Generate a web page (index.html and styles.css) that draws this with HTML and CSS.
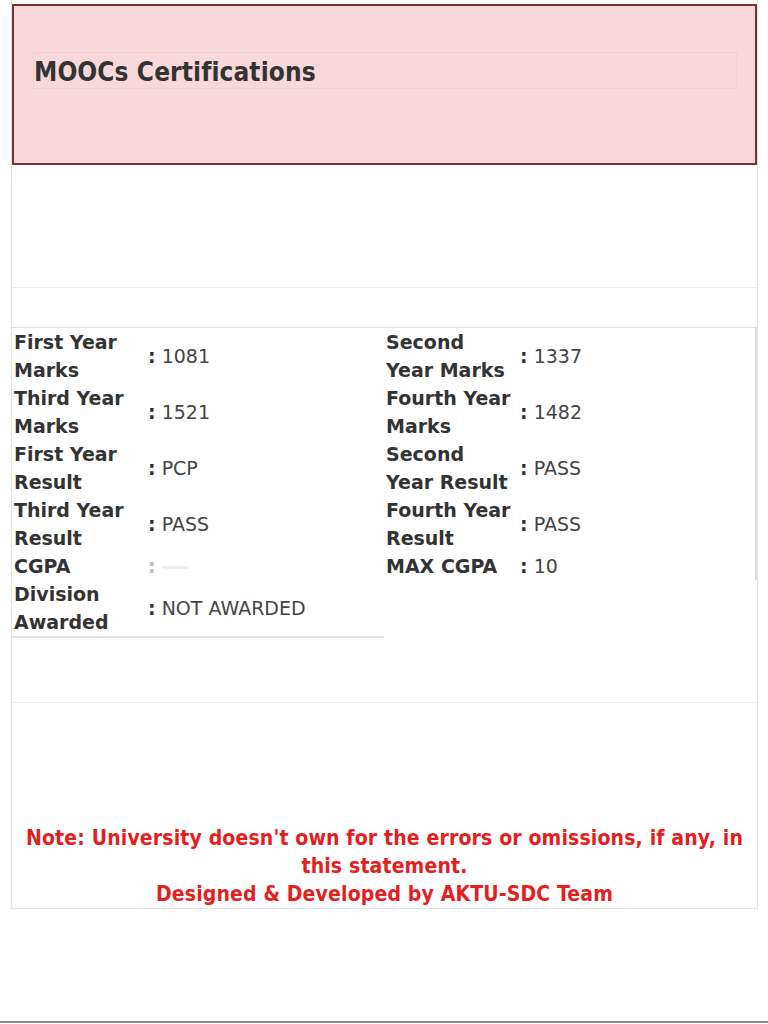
FILE: index.html
```html
<!DOCTYPE html>
<html lang="en">
<head>
<meta charset="utf-8">
<title>MOOCs Certifications</title>
<link rel="stylesheet" href="styles.css">
</head>
<body>
  <div class="page">
    <section class="banner">
      <div class="banner-title">
        <h2>MOOCs Certifications</h2>
      </div>
    </section>
    <div class="spacer-a"></div>
    <div class="spacer-b"></div>
    <div class="results">
      <table class="marks marks-left">
        <colgroup><col class="col-label"><col></colgroup>
        <tr><td class="label">First Year Marks</td><td class="value"><b>:</b> 1081</td></tr>
        <tr><td class="label">Third Year Marks</td><td class="value"><b>:</b> 1521</td></tr>
        <tr><td class="label">First Year Result</td><td class="value"><b>:</b> PCP</td></tr>
        <tr><td class="label">Third Year Result</td><td class="value"><b>:</b> PASS</td></tr>
        <tr><td class="label">CGPA</td><td class="value"><b class="faint">:</b> <span class="redacted"></span></td></tr>
        <tr><td class="label">Division Awarded</td><td class="value"><b>:</b> NOT AWARDED</td></tr>
      </table>
      <table class="marks marks-right">
        <colgroup><col class="col-label"><col></colgroup>
        <tr><td class="label">Second Year Marks</td><td class="value"><b>:</b> 1337</td></tr>
        <tr><td class="label">Fourth Year Marks</td><td class="value"><b>:</b> 1482</td></tr>
        <tr><td class="label">Second Year Result</td><td class="value"><b>:</b> PASS</td></tr>
        <tr><td class="label">Fourth Year Result</td><td class="value"><b>:</b> PASS</td></tr>
        <tr><td class="label">MAX CGPA</td><td class="value"><b>:</b> 10</td></tr>
      </table>
    </div>
    <div class="gap"></div>
    <footer class="note">
      <p>Note: University doesn't own for the errors or omissions, if any, in this statement.</p>
      <p>Designed &amp; Developed by AKTU-SDC Team</p>
    </footer>
  </div>
  <div class="bottom-bar"></div>
</body>
</html>
```

FILE: styles.css
```css
html, body {
  margin: 0;
  padding: 0;
  background: #ffffff;
}

body {
  height: 1024px;
  display: flex;
  flex-direction: column;
  font-family: "DejaVu Sans", Verdana, sans-serif;
  color: #333333;
  overflow: hidden;
}

.page {
  margin-left: 11px;
  width: 745px;
  border-left: 1px solid #e2e2e2;
  border-right: 1px solid #e2e2e2;
  border-bottom: 1px solid #e2e2e2;
  padding-top: 4px;
}

.banner {
  background: #f8d8da;
  border: 2px solid #7e2e2e;
  padding: 46px 18px 74px 19px;
}

.banner-title {
  border: 1px solid #e9d2d3;
  height: 35px;
  display: flex;
  align-items: center;
}

.banner-title h2 {
  margin: 0;
  padding-top: 2px;
  font-family: "DejaVu Sans Condensed", "DejaVu Sans", sans-serif;
  font-stretch: condensed;
  font-weight: bold;
  font-size: 26px;
  color: #333333;
  letter-spacing: 0.1px;
}

.spacer-a {
  height: 122px;
  border-bottom: 1px solid #ebebeb;
}

.spacer-b {
  height: 39px;
}

.results {
  display: flex;
  align-items: flex-start;
}

.marks {
  border-collapse: collapse;
  table-layout: fixed;
  border-top: 1px solid #e0e0e0;
  font-size: 19px;
  line-height: 28px;
}

.marks-left {
  width: 372px;
  border-bottom: 2px solid #e2e2e2;
}

.marks-right {
  width: 373px;
  border-right: 2px solid #dddddd;
}

.col-label {
  width: 134px;
}

.marks td {
  padding: 0;
  vertical-align: middle;
}

.marks td.label {
  padding: 0 4px 0 2px;
  font-weight: bold;
  color: #333333;
}

.marks td.value {
  padding-left: 2px;
  color: #444444;
  white-space: nowrap;
}

.marks td.value b {
  color: #333333;
}

.marks td.value b.faint {
  color: #b8b8b8;
}

.redacted {
  display: inline-block;
  width: 26px;
  height: 3px;
  background: #efefef;
  vertical-align: middle;
}

.gap {
  height: 64px;
  border-bottom: 1px solid #ececec;
}

.note {
  padding-top: 121px;
  text-align: center;
  font-family: "DejaVu Sans Condensed", "DejaVu Sans", sans-serif;
  font-stretch: condensed;
  font-weight: bold;
  font-size: 21px;
  letter-spacing: 0.15px;
  line-height: 28px;
  color: #e4201f;
}

.note p {
  margin: 0;
  padding: 0 10px;
}

.bottom-bar {
  margin-top: auto;
  margin-bottom: 1px;
  height: 2px;
  background: #8c8c8c;
}
```
